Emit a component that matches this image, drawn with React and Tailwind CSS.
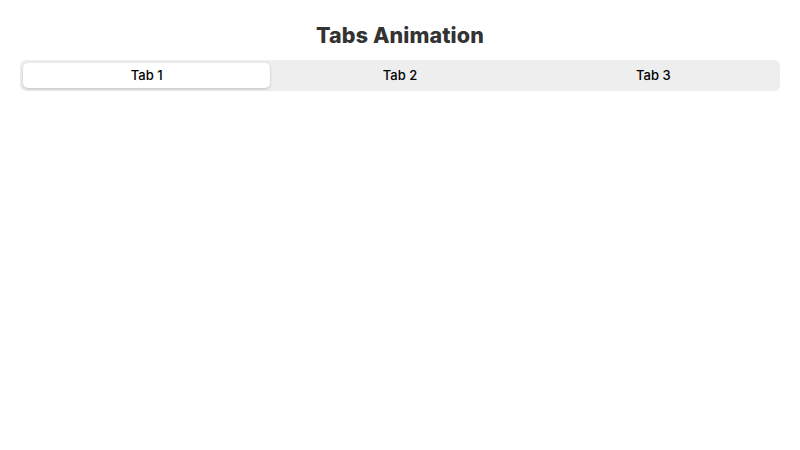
import React, { useState } from "react";

export default function App() {
  const [active, setActive] = useState(0);
  const tabs = ["Tab 1", "Tab 2", "Tab 3"];
  return (
    <div className="min-h-[450px] w-full bg-white px-5 pt-[20px]" style={{ fontFamily: "Inter, 'Noto Sans', sans-serif" }}>
      <h1 className="text-center text-[21.5px] leading-[30px] font-extrabold tracking-[0.1px] text-[#333333]">Tabs Animation</h1>
      <div className="mt-[10px] flex rounded-[6px] bg-[#eeeeee]">
        {tabs.map((t, i) => (
          <button key={t} onClick={() => setActive(i)} className="flex-1 h-[31px] p-[3px]">
            <div
              className={
                "flex h-full w-full items-center justify-center rounded-[5px] text-[13px] font-medium text-black " +
                (i === active ? "bg-white shadow-[0_1px_3px_rgba(0,0,0,0.2)]" : "")
              }
            >
              {t}
            </div>
          </button>
        ))}
      </div>
    </div>
  );
}
